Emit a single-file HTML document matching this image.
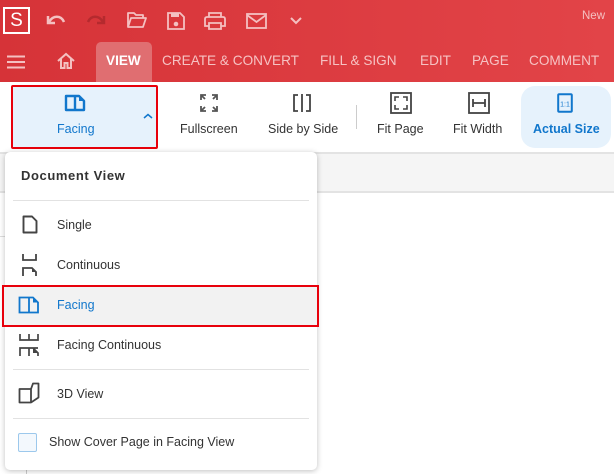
<!DOCTYPE html>
<html><head><meta charset="utf-8">
<style>
*{margin:0;padding:0;box-sizing:border-box}
body{width:614px;height:474px;overflow:hidden;font-family:"Liberation Sans",sans-serif;background:#fff;position:relative}
.top{position:absolute;left:0;top:0;width:614px;height:82px;background:linear-gradient(90deg,#d63338,#e24448)}
.abs{position:absolute}
.tab{position:absolute;top:53px;color:#f6c2c3;font-size:13.6px}
.tb{position:absolute;top:82px;left:0;width:614px;height:70px;background:#fff}
.lbl{position:absolute;font-size:12.5px;color:#333;top:122px}
.drop{position:absolute;left:5px;top:152px;width:312px;height:318px;background:#fff;border-radius:5px;box-shadow:0 1px 6px rgba(0,0,0,.25)}
.item{position:absolute;left:52px;font-size:12.5px;color:#333}
.hr{position:absolute;left:13px;width:296px;height:1px;background:#e2e2e2}
</style></head><body>
<div class="top"></div>
<div class="abs" style="left:3px;top:7px;width:27px;height:27px;border:2px solid #fff;color:#fff;font-size:19px;text-align:center;line-height:23px">S</div>
<svg class="abs" style="left:44px;top:10px" width="24" height="20" viewBox="0 0 24 20"><path d="M4 6 L4 13 L11 13" fill="none" stroke="#f4c0c1" stroke-width="2.5"/><path d="M5 12 C9 5 17 5 20 12" fill="none" stroke="#f4c0c1" stroke-width="2.5"/></svg>
<svg class="abs" style="left:84px;top:10px" width="24" height="20" viewBox="0 0 24 20"><path d="M20 6 L20 13 L13 13" fill="none" stroke="#b52a2e" stroke-width="2.5"/><path d="M19 12 C15 5 7 5 4 12" fill="none" stroke="#b52a2e" stroke-width="2.5"/></svg>
<svg class="abs" style="left:126px;top:11px" width="22" height="18" viewBox="0 0 22 18"><path d="M2 16 V2 H8 L10 4 H17 V7 M2 16 L5 7 H20 L17 16 Z" fill="none" stroke="#f4c0c1" stroke-width="1.8" stroke-linejoin="round"/></svg>
<svg class="abs" style="left:166px;top:11px" width="20" height="20" viewBox="0 0 20 20"><path d="M2 2 H14 L18 6 V18 H2 Z" fill="none" stroke="#f4c0c1" stroke-width="1.8"/><rect x="5" y="2" width="8" height="4" fill="#f4c0c1"/><circle cx="10" cy="13" r="2.3" fill="#f4c0c1"/></svg>
<svg class="abs" style="left:204px;top:12px" width="22" height="18" viewBox="0 0 22 18"><path d="M5 5 V1 H17 V5 M3 5 H19 Q21 5 21 7 V14 H17 M5 14 H1 V7 Q1 5 3 5 M5 11 H17 V17 H5 Z" fill="none" stroke="#f4c0c1" stroke-width="1.8"/></svg>
<svg class="abs" style="left:246px;top:13px" width="21" height="16" viewBox="0 0 21 16"><rect x="1" y="1" width="19" height="14" fill="none" stroke="#f4c0c1" stroke-width="1.8"/><path d="M1 2 L10.5 9 L20 2" fill="none" stroke="#f4c0c1" stroke-width="1.8"/></svg>
<svg class="abs" style="left:289px;top:16px" width="14" height="9" viewBox="0 0 14 9"><path d="M2 2 L7 7 L12 2" fill="none" stroke="#f4c0c1" stroke-width="2"/></svg>
<div class="abs" style="left:582px;top:10px;color:#f4c0c1;font-size:11.5px">New</div>
<svg class="abs" style="left:7px;top:55px" width="18" height="14" viewBox="0 0 18 14"><path d="M0 1.5H18M0 7H18M0 12.5H18" stroke="#f4c0c1" stroke-width="2"/></svg>
<svg class="abs" style="left:56px;top:51px" width="20" height="20" viewBox="0 0 20 20"><path d="M2 10 L10 3 L18 10 M5 8 V17 H8.5 V12 H11.5 V17 H15 V8" fill="none" stroke="#f4c0c1" stroke-width="2"/></svg>
<div class="abs" style="left:96px;top:42px;width:56px;height:40px;background:#e06e71;border-radius:5px 5px 0 0"></div>
<div class="tab" style="left:106px;color:#fff;font-weight:bold">VIEW</div>
<div class="tab" style="left:162px">CREATE &amp; CONVERT</div>
<div class="tab" style="left:320px">FILL &amp; SIGN</div>
<div class="tab" style="left:420px">EDIT</div>
<div class="tab" style="left:472px">PAGE</div>
<div class="tab" style="left:529px">COMMENT</div>
<div class="tb"></div>
<div class="abs" style="left:11px;top:85px;width:147px;height:64px;background:#e6f2fc;border:2.5px solid #e8000b;border-radius:2px"></div>
<svg class="abs" style="left:64px;top:94px" width="22" height="18" viewBox="0 0 22 18"><path d="M2 2 H15 L20 7 V16 H2 Z M11 2 V16" fill="none" stroke="#1177cc" stroke-width="2.4" stroke-linejoin="round"/><path d="M15 2 V7 H20" fill="#1177cc"/></svg>
<div class="lbl" style="left:57px;color:#1177cc">Facing</div>
<svg class="abs" style="left:143px;top:113px" width="10" height="6" viewBox="0 0 10 6"><path d="M1 5 L5 1.5 L9 5" fill="none" stroke="#1177cc" stroke-width="1.5"/></svg>
<svg class="abs" style="left:199px;top:93px" width="20" height="20" viewBox="0 0 20 20"><path d="M2 7V2H7M2 2L6 6M13 2H18V7M18 2L14 6M2 13V18H7M2 18L6 14M18 13V18H13M18 18L14 14" fill="none" stroke="#555" stroke-width="1.8"/></svg>
<div class="lbl" style="left:180px">Fullscreen</div>
<svg class="abs" style="left:292px;top:93px" width="20" height="20" viewBox="0 0 20 20"><path d="M6 2H2V18H6M14 2H18V18H14M10 1V19" fill="none" stroke="#444" stroke-width="1.8"/></svg>
<div class="lbl" style="left:268px">Side by Side</div>
<div class="abs" style="left:356px;top:105px;width:1px;height:24px;background:#ccc"></div>
<svg class="abs" style="left:390px;top:92px" width="22" height="22" viewBox="0 0 22 22"><rect x="1" y="1" width="20" height="20" fill="none" stroke="#444" stroke-width="1.8"/><path d="M5 9V5H9M13 5H17V9M5 13V17H9M17 13V17H13" fill="none" stroke="#444" stroke-width="1.6"/></svg>
<div class="lbl" style="left:377px">Fit Page</div>
<svg class="abs" style="left:468px;top:92px" width="22" height="22" viewBox="0 0 22 22"><rect x="1" y="1" width="20" height="20" fill="none" stroke="#444" stroke-width="1.8"/><path d="M5 7V15M17 7V15M5 11H17" fill="none" stroke="#444" stroke-width="1.8"/></svg>
<div class="lbl" style="left:453px">Fit Width</div>
<div class="abs" style="left:521px;top:86px;width:90px;height:62px;background:#e6f2fc;border-radius:14px"></div>
<svg class="abs" style="left:557px;top:93px" width="16" height="20" viewBox="0 0 16 20"><rect x="1.2" y="1.2" width="13.6" height="17.6" rx="1" fill="none" stroke="#1177cc" stroke-width="2"/><text x="8" y="13.5" font-size="7" fill="#1177cc" text-anchor="middle" font-family="Liberation Sans">1:1</text></svg>
<div class="lbl" style="left:533px;color:#1177cc;font-weight:bold">Actual Size</div>
<div class="abs" style="left:0;top:152px;width:614px;height:41px;background:#f5f5f5;border-top:2px solid #e3e3e3;border-bottom:2px solid #e3e3e3"></div>
<div class="abs" style="left:0;top:236px;width:5px;height:1px;background:#ddd"></div>
<div class="abs" style="left:26px;top:456px;width:1px;height:18px;background:#ccc"></div>
<div class="drop"></div>
<div class="abs" style="left:21px;top:168px;font-size:13px;font-weight:bold;color:#333;letter-spacing:.6px">Document View</div>
<div class="hr" style="top:200px"></div>
<svg class="abs" style="left:22px;top:215px" width="16" height="19" viewBox="0 0 16 19"><path d="M1.5 1.5H10L14.5 6V17.5H1.5Z" fill="none" stroke="#444" stroke-width="1.9" stroke-linejoin="round"/></svg>
<div class="item" style="left:57px;top:218px">Single</div>
<svg class="abs" style="left:21px;top:254px" width="20" height="22" viewBox="0 0 20 22"><path d="M2 0V6H15V0M2 22V14H11L15 18V22" fill="none" stroke="#444" stroke-width="1.8"/><path d="M11 14V18H15Z" fill="#444"/></svg>
<div class="item" style="left:57px;top:258px">Continuous</div>
<div class="abs" style="left:2px;top:285px;width:317px;height:42px;background:#f2f2f2;border:2.5px solid #e8000b"></div>
<svg class="abs" style="left:18px;top:296px" width="22" height="18" viewBox="0 0 22 18"><path d="M1.5 1.5H15L20 6.5V16.5H1.5ZM11 1.5V16.5" fill="none" stroke="#1177cc" stroke-width="1.8"/><path d="M15 1.5V6.5H20Z" fill="#1177cc"/></svg>
<div class="item" style="left:57px;top:298px;color:#1177cc">Facing</div>
<svg class="abs" style="left:18px;top:334px" width="22" height="22" viewBox="0 0 22 22"><path d="M2 0V6H20V0M11 0V6M2 22V14H20M11 14V22M15 14L20 19V22" fill="none" stroke="#444" stroke-width="1.7"/><path d="M15 14V19H20Z" fill="#444"/></svg>
<div class="item" style="left:57px;top:338px">Facing Continuous</div>
<div class="hr" style="top:369px"></div>
<svg class="abs" style="left:18px;top:382px" width="22" height="22" viewBox="0 0 22 22"><path d="M1.5 7H13V20.5H1.5ZM13 7L15 1.5H20.5V15.5L13 20.5" fill="none" stroke="#444" stroke-width="1.8" stroke-linejoin="round"/></svg>
<div class="item" style="left:57px;top:387px">3D View</div>
<div class="hr" style="top:418px"></div>
<div class="abs" style="left:18px;top:433px;width:19px;height:19px;border:1px solid #9cc8ec;background:#f3f8fd;border-radius:2px"></div>
<div class="item" style="left:49px;top:435px">Show Cover Page in Facing View</div>
</body></html>
